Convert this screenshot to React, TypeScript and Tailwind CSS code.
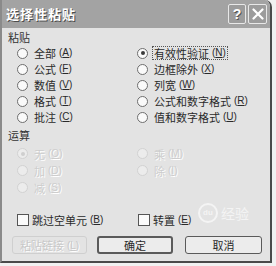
import React from "react";

const cjk = { fontFamily: '"Noto Sans CJK SC", "Liberation Sans", sans-serif' };

function Radio({ checked = false, disabled = false }: { checked?: boolean; disabled?: boolean }) {
  return (
    <span
      className={`w-[11px] h-[11px] rounded-full border flex items-center justify-center shrink-0 ${
        disabled ? "border-[#d2d2d2] bg-[#ececec]" : "border-[#6e6e6e] bg-[#fafafa]"
      }`}
    >
      {checked && <span className={`w-[4px] h-[4px] rounded-full ${disabled ? "bg-[#cfcfcf]" : "bg-[#3a3a3a]"}`} />}
    </span>
  );
}

function Key({ k }: { k: string }) {
  return (
    <span className="ml-[3px] text-[10px]" style={{ fontFamily: '"Liberation Sans", sans-serif' }}>
      (<span className="underline">{k}</span>)
    </span>
  );
}

function Option({
  label,
  k,
  checked,
  disabled,
  focus,
}: {
  label: string;
  k: string;
  checked?: boolean;
  disabled?: boolean;
  focus?: boolean;
}) {
  return (
    <div className="flex items-center h-full">
      <Radio checked={checked} disabled={disabled} />
      <span
        className={`ml-[5px] flex items-center leading-[12px] px-[1px] ${
          focus ? "outline outline-1 outline-dotted outline-[#555] outline-offset-0" : ""
        } ${disabled ? "text-[#cdcdcd] [text-shadow:1px_1px_0_#ffffff]" : "text-[#2a2a2a]"}`}
      >
        {label}
        <Key k={k} />
      </span>
    </div>
  );
}

function Check({ label, k }: { label: string; k: string }) {
  return (
    <div className="flex items-center">
      <span className="w-[12px] h-[12px] border border-[#555] bg-[#fafafa] shrink-0" />
      <span className="ml-[3px] text-[#2a2a2a] leading-[12px] flex items-center">
        {label}
        <Key k={k} />
      </span>
    </div>
  );
}

export default function App() {
  const paste = [
    ["全部", "A", "有效性验证", "N"],
    ["公式", "F", "边框除外", "X"],
    ["数值", "V", "列宽", "W"],
    ["格式", "T", "公式和数字格式", "R"],
    ["批注", "C", "值和数字格式", "U"],
  ];

  return (
    <div className="w-[276px] h-[266px] bg-[#f1f1f1] overflow-hidden" style={cjk}>
      <div className="relative w-[272px] h-[263px] flex flex-col bg-[#e3e3e3] border-l-2 border-r-2 border-b-2 border-l-[#8a8a8a] border-r-[#4a4a4a] border-b-[#4a4a4a] rounded-tr-[7px] overflow-hidden text-[11px]">
        {/* Title bar */}
        <div className="h-[28px] shrink-0 bg-[#a3a3a3] flex items-center pl-[4px] pr-[3px]">
          <span className="text-[13px] font-bold text-white tracking-[1px] [text-shadow:1px_1px_0_#4c4c4c]">
            选择性粘贴
          </span>
          <div className="ml-auto flex gap-[2px]">
            <div className="w-[18px] h-[20px] border border-[#e8e8e8] bg-[#9c9c9c] rounded-[2px] flex items-center justify-center text-white font-bold text-[14px] [text-shadow:1px_1px_0_#555]" style={{ fontFamily: '"Liberation Sans", sans-serif' }}>
              ?
            </div>
            <div className="w-[19px] h-[20px] border border-[#e8e8e8] bg-[#9c9c9c] rounded-[2px] flex items-center justify-center">
              <svg width="12" height="12" viewBox="0 0 12 12">
                <path d="M1.5 1.5 L10.5 10.5 M10.5 1.5 L1.5 10.5" stroke="#ffffff" strokeWidth="2.2" strokeLinecap="round" />
              </svg>
            </div>
          </div>
        </div>

        {/* Body */}
        <div className="flex flex-col pl-[6px] pr-[6px]">
          <div className="mt-[2px] h-[14px] leading-[14px] text-[#333]">粘贴</div>

          <div className="mt-[1px] grid grid-cols-[120px_1fr] pl-[9px]">
            {paste.map(([a, ka, b, kb], i) => (
              <React.Fragment key={i}>
                <div className="h-[16px]">
                  <Option label={a} k={ka} />
                </div>
                <div className="h-[16px]">
                  <Option label={b} k={kb} checked={i === 0} focus={i === 0} />
                </div>
              </React.Fragment>
            ))}
          </div>

          <div className="mt-[3px] h-[14px] leading-[14px] text-[#333]">运算</div>

          <div className="mt-[3px] grid grid-cols-[120px_1fr] pl-[9px]">
            <div className="h-[17px]">
              <Option label="无" k="O" checked disabled />
            </div>
            <div className="h-[17px]">
              <Option label="乘" k="M" disabled />
            </div>
            <div className="h-[17px]">
              <Option label="加" k="D" disabled />
            </div>
            <div className="h-[17px]">
              <Option label="除" k="I" disabled />
            </div>
            <div className="h-[17px]">
              <Option label="减" k="S" disabled />
            </div>
            <div className="h-[17px]" />
          </div>

          <div className="mt-[18px] grid grid-cols-[121px_1fr] pl-[9px]">
            <Check label="跳过空单元" k="B" />
            <Check label="转置" k="E" />
          </div>

          <div className="mt-[10px] flex pl-[4px] gap-[10px]">
            <div className="w-[75px] h-[18px] rounded-[3px] border border-[#cfcfcf] flex items-center justify-center text-[#c8c8c8] [text-shadow:1px_1px_0_#ffffff]">
              粘贴链接
              <Key k="L" />
            </div>
            <div className="w-[76px] h-[18px] rounded-[3px] border-2 border-[#5a5a5a] bg-[#ececec] flex items-center justify-center text-[#2a2a2a]">
              确定
            </div>
            <div className="ml-[2px] w-[77px] h-[18px] rounded-[3px] border border-[#5a5a5a] bg-[#ececec] flex items-center justify-center text-[#2a2a2a]">
              取消
            </div>
          </div>
        </div>

        {/* Watermark */}
        <div className="absolute left-[196px] top-[203px] flex flex-col items-start text-[#f4f4f4] pointer-events-none">
          <div className="flex items-center h-[20px]">
            <span className="w-[20px] h-[20px] rounded-full border-2 border-[#f4f4f4] flex items-center justify-center text-[8px] font-bold" style={{ fontFamily: '"Liberation Sans", sans-serif' }}>
              du
            </span>
            <span className="ml-[3px] text-[14px] leading-none">经验</span>
          </div>
        </div>
      </div>
    </div>
  );
}
